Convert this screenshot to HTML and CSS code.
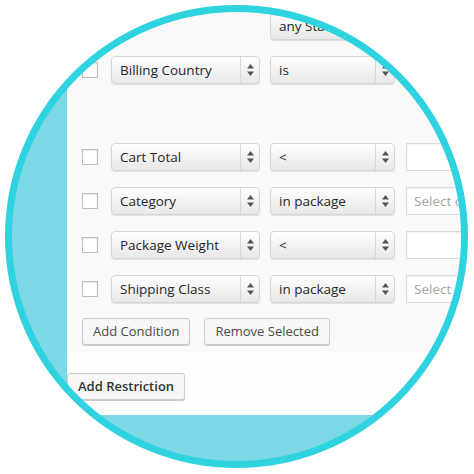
FILE: index.html
```html
<!DOCTYPE html>
<html>
<head>
<meta charset="utf-8">
<link rel="stylesheet" href="styles.css">
</head>
<body>
<div class="viewport">
  <div class="screen">
    <div class="panel">
      <div class="upper">
        <div class="row">
          <span class="cb-slot"></span>
          <span class="sel-slot"></span>
          <div class="sel sel-op"><span class="sel-label">any State</span><span class="sel-arrow"><svg width="7" height="12" viewBox="0 0 7 12"><path d="M3.5 0L7 4.5H0Z M0 7.5H7L3.5 12Z" fill="#555"/></svg></span></div>
        </div>
        <div class="row">
          <span class="cb"></span>
          <div class="sel sel-field"><span class="sel-label">Billing Country</span><span class="sel-arrow"><svg width="7" height="12" viewBox="0 0 7 12"><path d="M3.5 0L7 4.5H0Z M0 7.5H7L3.5 12Z" fill="#555"/></svg></span></div>
          <div class="sel sel-op"><span class="sel-label">is</span><span class="sel-arrow"><svg width="7" height="12" viewBox="0 0 7 12"><path d="M3.5 0L7 4.5H0Z M0 7.5H7L3.5 12Z" fill="#555"/></svg></span></div>
        </div>
        <div class="row row-gap">
          <span class="cb"></span>
          <div class="sel sel-field"><span class="sel-label">Cart Total</span><span class="sel-arrow"><svg width="7" height="12" viewBox="0 0 7 12"><path d="M3.5 0L7 4.5H0Z M0 7.5H7L3.5 12Z" fill="#555"/></svg></span></div>
          <div class="sel sel-op"><span class="sel-label">&lt;</span><span class="sel-arrow"><svg width="7" height="12" viewBox="0 0 7 12"><path d="M3.5 0L7 4.5H0Z M0 7.5H7L3.5 12Z" fill="#555"/></svg></span></div>
          <div class="input"></div>
        </div>
        <div class="row">
          <span class="cb"></span>
          <div class="sel sel-field"><span class="sel-label">Category</span><span class="sel-arrow"><svg width="7" height="12" viewBox="0 0 7 12"><path d="M3.5 0L7 4.5H0Z M0 7.5H7L3.5 12Z" fill="#555"/></svg></span></div>
          <div class="sel sel-op"><span class="sel-label">in package</span><span class="sel-arrow"><svg width="7" height="12" viewBox="0 0 7 12"><path d="M3.5 0L7 4.5H0Z M0 7.5H7L3.5 12Z" fill="#555"/></svg></span></div>
          <div class="input"><span class="placeholder">Select categories</span></div>
        </div>
        <div class="row">
          <span class="cb"></span>
          <div class="sel sel-field"><span class="sel-label">Package Weight</span><span class="sel-arrow"><svg width="7" height="12" viewBox="0 0 7 12"><path d="M3.5 0L7 4.5H0Z M0 7.5H7L3.5 12Z" fill="#555"/></svg></span></div>
          <div class="sel sel-op"><span class="sel-label">&lt;</span><span class="sel-arrow"><svg width="7" height="12" viewBox="0 0 7 12"><path d="M3.5 0L7 4.5H0Z M0 7.5H7L3.5 12Z" fill="#555"/></svg></span></div>
          <div class="input"></div>
        </div>
        <div class="row">
          <span class="cb"></span>
          <div class="sel sel-field"><span class="sel-label">Shipping Class</span><span class="sel-arrow"><svg width="7" height="12" viewBox="0 0 7 12"><path d="M3.5 0L7 4.5H0Z M0 7.5H7L3.5 12Z" fill="#555"/></svg></span></div>
          <div class="sel sel-op"><span class="sel-label">in package</span><span class="sel-arrow"><svg width="7" height="12" viewBox="0 0 7 12"><path d="M3.5 0L7 4.5H0Z M0 7.5H7L3.5 12Z" fill="#555"/></svg></span></div>
          <div class="input"><span class="placeholder">Select shipping classes</span></div>
        </div>
        <div class="actions">
          <button class="btn">Add Condition</button>
          <button class="btn">Remove Selected</button>
        </div>
      </div>
      <div class="lower">
        <button class="btn btn-strong">Add Restriction</button>
      </div>
    </div>
  </div>
  <div class="ring"></div>
</div>
</body>
</html>
```
FILE: styles.css
```css
html, body {
  margin: 0;
  padding: 0;
  background: #fff;
}

body {
  font-family: "Open Sans", "Liberation Sans", sans-serif;
}

.viewport {
  position: relative;
  width: 474px;
  height: 474px;
  overflow: hidden;
  background: #fff;
}

.screen {
  width: 474px;
  height: 474px;
  box-sizing: border-box;
  padding-left: 67px;
  background: #7dd8e5;
  clip-path: circle(226px at 236.5px 236.5px);
}

.panel {
  height: 415px;
  display: flex;
  flex-direction: column;
}

.upper {
  background: #f9f9f9;
  padding: 12px 0 7px 15px;
}

.lower {
  flex: 1;
  background: #fdfdfd;
  padding-top: 21px;
}

.row {
  display: flex;
  align-items: center;
  height: 28px;
}

.row + .row {
  margin-top: 16px;
}

.row.row-gap {
  margin-top: 59px;
}

.cb,
.cb-slot {
  flex: none;
  width: 16px;
  height: 16px;
  margin-right: 13px;
  box-sizing: border-box;
}

.cb {
  border: 1px solid #bcbcbc;
  background: #fff;
  box-shadow: inset 0 1px 2px rgba(0, 0, 0, 0.1);
}

.sel-slot {
  flex: none;
  width: 149px;
  margin-right: 10px;
}

.sel {
  flex: none;
  display: flex;
  align-items: center;
  height: 28px;
  box-sizing: border-box;
  border: 1px solid #d6d6d6;
  border-radius: 4px;
  background: linear-gradient(#fefefe, #e8e8e8);
  box-shadow: 0 1px 1px rgba(0, 0, 0, 0.1);
  font-size: 13.5px;
  color: #262626;
}

.sel-field {
  width: 149px;
  margin-right: 10px;
}

.sel-op {
  width: 125px;
  margin-right: 11px;
}

.sel-label {
  flex: 1;
  padding-left: 8px;
  white-space: nowrap;
  overflow: hidden;
}

.sel-arrow {
  flex: none;
  width: 18px;
  align-self: stretch;
  border-left: 1px solid #d8d8d8;
  display: flex;
  align-items: center;
  justify-content: center;
}

.input {
  flex: none;
  display: flex;
  align-items: center;
  width: 150px;
  height: 28px;
  box-sizing: border-box;
  padding-left: 7px;
  border: 1px solid #dcdcdc;
  background: #fff;
  box-shadow: inset 0 1px 2px rgba(0, 0, 0, 0.07);
  font-size: 13.5px;
  white-space: nowrap;
  overflow: hidden;
}

.placeholder {
  color: #a3a3a3;
}

.actions {
  display: flex;
  gap: 14px;
  margin-top: 15px;
}

.btn {
  height: 27px;
  box-sizing: border-box;
  padding: 0 10px;
  border: 1px solid #cccccc;
  border-radius: 3px;
  background: #f7f7f7;
  box-shadow: 0 1px 0 #cccccc;
  color: #4a4a4a;
  font-family: "Open Sans", "Liberation Sans", sans-serif;
  font-size: 13px;
  line-height: 25px;
  white-space: nowrap;
}

.btn-strong {
  font-weight: 600;
  color: #333;
}

.ring {
  position: absolute;
  left: 5px;
  top: 5px;
  width: 463px;
  height: 463px;
  box-sizing: border-box;
  border: 7.5px solid #2fd3e0;
  border-radius: 50%;
}
```
